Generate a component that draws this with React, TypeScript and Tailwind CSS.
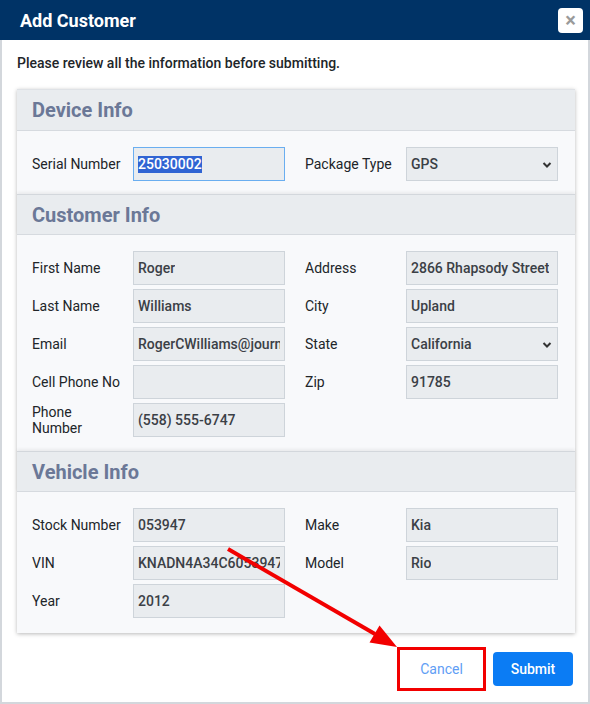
import React from "react";

type Field = { label: string; value?: string; select?: boolean; selected?: boolean };

function Input({ value, select, selected }: { value?: string; select?: boolean; selected?: boolean }) {
  return (
    <div
      className={
        "relative flex h-[34px] w-[152px] shrink-0 items-center overflow-hidden whitespace-nowrap border bg-[#e9ecef] pl-[4px] pr-[4px] text-[14px] font-medium text-[#3b4046] " +
        (selected ? "border-[#6aaef0]" : "border-[#ced4da]")
      }
    >
      {selected ? (
        <span className="bg-[#3064d3] leading-[17px] text-white">{value}</span>
      ) : (
        <span className="overflow-hidden">{value}</span>
      )}
      {select && (
        <svg className="absolute right-[5px] top-[13px]" width="10" height="8" viewBox="0 0 10 8">
          <polyline points="1.5,2 5,5.5 8.5,2" fill="none" stroke="#333" strokeWidth="2" />
        </svg>
      )}
    </div>
  );
}

function Row({ f }: { f: Field }) {
  return (
    <div className="flex h-[34px] w-[253px] items-center">
      <div className="w-[101px] shrink-0 pr-[11px] text-[14px] leading-[16px] text-[#212529]">{f.label}</div>
      <Input value={f.value} select={f.select} selected={f.selected} />
    </div>
  );
}

function Section({
  title,
  left,
  right,
  first,
  pb,
}: {
  title: string;
  left: Field[];
  right: Field[];
  first?: boolean;
  pb: string;
}) {
  return (
    <div>
      <div
        className={
          "flex h-[41px] items-center border-b border-[#d6dadf] bg-[#e9ecef] pl-[15px] " +
          (first ? "" : "border-t border-t-[#d3d7dc] shadow-[0_-2px_3px_rgba(0,0,0,0.06)]")
        }
      >
        <span className="text-[20px] font-bold text-[#6b7897]">{title}</span>
      </div>
      <div className={"flex gap-[20px] bg-[#f8f9fb] pl-[15px] pt-[16px] " + pb}>
        <div className="flex flex-col gap-[4px]">
          {left.map((f) => (
            <Row key={f.label} f={f} />
          ))}
        </div>
        <div className="flex flex-col gap-[4px]">
          {right.map((f) => (
            <Row key={f.label} f={f} />
          ))}
        </div>
      </div>
    </div>
  );
}

export default function App() {
  return (
    <div
      className="relative h-[704px] w-[590px] overflow-hidden bg-white"
      style={{ fontFamily: "Roboto, 'Noto Sans', Arial, sans-serif" }}
    >
      <div className="flex h-[40px] items-center justify-between bg-[#003366] pl-[20px] pr-[7px]">
        <span className="text-[18px] font-bold text-white">Add Customer</span>
        <div className="flex h-[25px] w-[25px] items-center justify-center rounded-[4px] bg-white text-[20px] font-bold leading-none text-[#9a9a9a]">
          ×
        </div>
      </div>
      <div className="flex h-[664px] flex-col border-x-2 border-b-2 border-[#d3d7dc]">
        <div className="pl-[15px] pt-[13px] text-[14px] font-medium leading-[20px] text-[#212529]">
          Please review all the information before submitting.
        </div>
        <div className="ml-[15px] mt-[16px] w-[558px] border-t border-[#dfe2e6] bg-[#f8f9fb] shadow-[0_1px_4px_rgba(0,0,0,0.28)]">
          <Section
            first
            title="Device Info"
            pb="pb-[13px]"
            left={[{ label: "Serial Number", value: "25030002", selected: true }]}
            right={[{ label: "Package Type", value: "GPS", select: true }]}
          />
          <Section
            title="Customer Info"
            pb="pb-[14px]"
            left={[
              { label: "First Name", value: "Roger" },
              { label: "Last Name", value: "Williams" },
              { label: "Email", value: "RogerCWilliams@journey.com" },
              { label: "Cell Phone No", value: "" },
              { label: "Phone Number", value: "(558) 555-6747" },
            ]}
            right={[
              { label: "Address", value: "2866 Rhapsody Street" },
              { label: "City", value: "Upland" },
              { label: "State", value: "California", select: true },
              { label: "Zip", value: "91785" },
            ]}
          />
          <Section
            title="Vehicle Info"
            pb="pb-[15px]"
            left={[
              { label: "Stock Number", value: "053947" },
              { label: "VIN", value: "KNADN4A34C6053947" },
              { label: "Year", value: "2012" },
            ]}
            right={[
              { label: "Make", value: "Kia" },
              { label: "Model", value: "Rio" },
            ]}
          />
        </div>
        <div className="mt-[14px] flex items-center justify-end gap-[7px] pr-[15px]">
          <div className="flex h-[44px] w-[89px] items-center justify-center border-[3px] border-[#f20000] text-[14px] text-[#5f9ef5]">
            Cancel
          </div>
          <div className="flex h-[34px] w-[80px] items-center justify-center rounded-[4px] bg-[#0b7cf4] text-[14px] font-medium text-white">
            Submit
          </div>
        </div>
      </div>
      <svg className="pointer-events-none absolute left-0 top-0" width="590" height="704">
        <line x1="228" y1="549" x2="375" y2="634" stroke="#f20000" strokeWidth="4" />
        <polygon points="397,647 369.5,642.5 379.5,625.5" fill="#f20000" />
      </svg>
    </div>
  );
}
